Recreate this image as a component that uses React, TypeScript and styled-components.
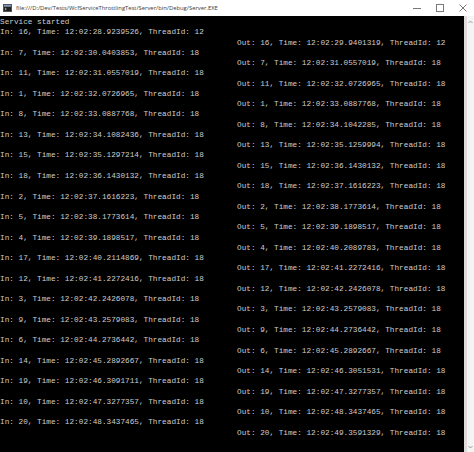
import React from "react";
import styled, { createGlobalStyle } from "styled-components";

const Global = createGlobalStyle`
  html, body { margin: 0; padding: 0; background: #000; }
  body { width: 474px; height: 452px; overflow: hidden; }
`;

const Window = styled.div`
  width: 474px;
  height: 452px;
  display: flex;
  flex-direction: column;
  background: #fff;
  overflow: hidden;
`;

const TitleBar = styled.div`
  height: 16px;
  flex: none;
  display: flex;
  align-items: center;
  background: #ffffff;
  padding-left: 3px;
`;

const TitleText = styled.span`
  font-family: "Open Sans", "Liberation Sans", sans-serif;
  font-size: 5.85px;
  color: #3a3a3a;
  margin-left: 4px;
  white-space: nowrap;
  flex: 1;
`;

const Controls = styled.div`
  display: flex;
  align-items: center;
  height: 16px;
`;

const CtlButton = styled.div`
  width: 23px;
  height: 16px;
  display: flex;
  align-items: center;
  justify-content: center;
`;

const Body = styled.div`
  flex: 1;
  display: flex;
  min-height: 0;
`;

const Console = styled.div`
  flex: 1;
  background: #000;
  padding-top: 1px;
  font-family: "Liberation Mono", "DejaVu Sans Mono", monospace;
  font-size: 7.73px;
  color: #cdcdcd;
  overflow: hidden;
`;

const Line = styled.div<{ $indent?: boolean }>`
  height: 10.27px;
  line-height: 10.27px;
  white-space: pre;
  padding-left: ${(p) => (p.$indent ? "237px" : "0")};
`;

const ScrollBar = styled.div`
  width: 10px;
  flex: none;
  display: flex;
  flex-direction: column;
  background: linear-gradient(to right, #dcdcdc 0 3px, #f4f4f4 3px);
`;

const Arrow = styled.div`
  height: 11px;
  display: flex;
  align-items: center;
  justify-content: center;
  background: #f4f4f4;
  margin-left: 3px;
`;

const Track = styled.div`
  flex: 1;
`;

const ins = [
  "In: 16, Time: 12:02:28.9239526, ThreadId: 12",
  "In: 7, Time: 12:02:30.0403853, ThreadId: 18",
  "In: 11, Time: 12:02:31.0557019, ThreadId: 18",
  "In: 1, Time: 12:02:32.0726965, ThreadId: 18",
  "In: 8, Time: 12:02:33.0887768, ThreadId: 18",
  "In: 13, Time: 12:02:34.1082436, ThreadId: 18",
  "In: 15, Time: 12:02:35.1297214, ThreadId: 18",
  "In: 18, Time: 12:02:36.1430132, ThreadId: 18",
  "In: 2, Time: 12:02:37.1616223, ThreadId: 18",
  "In: 5, Time: 12:02:38.1773614, ThreadId: 18",
  "In: 4, Time: 12:02:39.1898517, ThreadId: 18",
  "In: 17, Time: 12:02:40.2114869, ThreadId: 18",
  "In: 12, Time: 12:02:41.2272416, ThreadId: 18",
  "In: 3, Time: 12:02:42.2426078, ThreadId: 18",
  "In: 9, Time: 12:02:43.2579083, ThreadId: 18",
  "In: 6, Time: 12:02:44.2736442, ThreadId: 18",
  "In: 14, Time: 12:02:45.2892667, ThreadId: 18",
  "In: 19, Time: 12:02:46.3091711, ThreadId: 18",
  "In: 10, Time: 12:02:47.3277357, ThreadId: 18",
  "In: 20, Time: 12:02:48.3437465, ThreadId: 18",
];

const outs = [
  "Out: 16, Time: 12:02:29.9401319, ThreadId: 12",
  "Out: 7, Time: 12:02:31.0557019, ThreadId: 18",
  "Out: 11, Time: 12:02:32.0726965, ThreadId: 18",
  "Out: 1, Time: 12:02:33.0887768, ThreadId: 18",
  "Out: 8, Time: 12:02:34.1042285, ThreadId: 18",
  "Out: 13, Time: 12:02:35.1259994, ThreadId: 18",
  "Out: 15, Time: 12:02:36.1430132, ThreadId: 18",
  "Out: 18, Time: 12:02:37.1616223, ThreadId: 18",
  "Out: 2, Time: 12:02:38.1773614, ThreadId: 18",
  "Out: 5, Time: 12:02:39.1898517, ThreadId: 18",
  "Out: 4, Time: 12:02:40.2089783, ThreadId: 18",
  "Out: 17, Time: 12:02:41.2272416, ThreadId: 18",
  "Out: 12, Time: 12:02:42.2426078, ThreadId: 18",
  "Out: 3, Time: 12:02:43.2579083, ThreadId: 18",
  "Out: 9, Time: 12:02:44.2736442, ThreadId: 18",
  "Out: 6, Time: 12:02:45.2892667, ThreadId: 18",
  "Out: 14, Time: 12:02:46.3051531, ThreadId: 18",
  "Out: 19, Time: 12:02:47.3277357, ThreadId: 18",
  "Out: 10, Time: 12:02:48.3437465, ThreadId: 18",
  "Out: 20, Time: 12:02:49.3591329, ThreadId: 18",
];

const ConsoleIcon = () => (
  <svg width="9" height="8" viewBox="0 0 9 8">
    <rect x="0.5" y="0.5" width="8" height="7" fill="#fff" stroke="#555" />
    <rect x="1" y="1" width="7" height="1.5" fill="#7a9cc6" />
    <rect x="1" y="2.5" width="7" height="4.5" fill="#222" />
    <path d="M2 4 L3.3 5 L2 6" stroke="#ddd" strokeWidth="0.7" fill="none" />
  </svg>
);

export default function App() {
  return (
    <>
      <Global />
      <Window>
        <TitleBar>
          <ConsoleIcon />
          <TitleText>file:///D:/Dev/Tests/WcfServiceThrottlingTest/Server/bin/Debug/Server.EXE</TitleText>
          <Controls>
            <CtlButton>
              <svg width="8" height="8" viewBox="0 0 8 8">
                <path d="M0 4.5 H8" stroke="#777" strokeWidth="1" />
              </svg>
            </CtlButton>
            <CtlButton>
              <svg width="8" height="8" viewBox="0 0 8 8">
                <rect x="0.5" y="0.5" width="7" height="7" fill="none" stroke="#777" strokeWidth="1" />
              </svg>
            </CtlButton>
            <CtlButton>
              <svg width="8" height="8" viewBox="0 0 8 8">
                <path d="M0.5 0.5 L7.5 7.5 M7.5 0.5 L0.5 7.5" stroke="#777" strokeWidth="1" />
              </svg>
            </CtlButton>
          </Controls>
        </TitleBar>
        <Body>
          <Console>
            <Line>Service started</Line>
            {ins.map((l, i) => (
              <React.Fragment key={i}>
                <Line>{l}</Line>
                <Line $indent>{outs[i]}</Line>
              </React.Fragment>
            ))}
          </Console>
          <ScrollBar>
            <Arrow>
              <svg width="5" height="4" viewBox="0 0 5 4">
                <path d="M0.5 3 L2.5 1 L4.5 3" stroke="#888" strokeWidth="0.8" fill="none" />
              </svg>
            </Arrow>
            <Track />
            <Arrow>
              <svg width="5" height="4" viewBox="0 0 5 4">
                <path d="M0.5 1 L2.5 3 L4.5 1" stroke="#888" strokeWidth="0.8" fill="none" />
              </svg>
            </Arrow>
          </ScrollBar>
        </Body>
      </Window>
    </>
  );
}
